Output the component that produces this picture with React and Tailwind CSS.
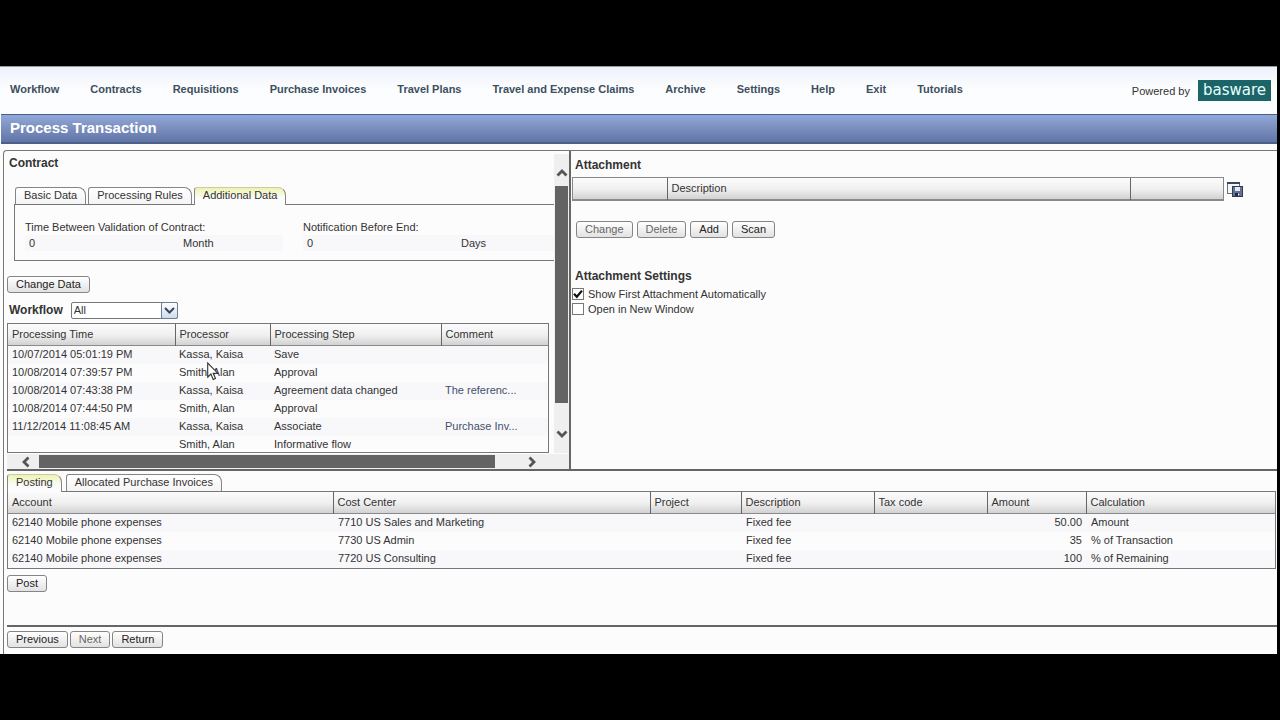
import React from 'react';

const navItems = [
  'Workflow',
  'Contracts',
  'Requisitions',
  'Purchase Invoices',
  'Travel Plans',
  'Travel and Expense Claims',
  'Archive',
  'Settings',
  'Help',
  'Exit',
  'Tutorials',
];

const workflowRows = [
  ['10/07/2014 05:01:19 PM', 'Kassa, Kaisa', 'Save', ''],
  ['10/08/2014 07:39:57 PM', 'Smith, Alan', 'Approval', ''],
  ['10/08/2014 07:43:38 PM', 'Kassa, Kaisa', 'Agreement data changed', 'The referenc...'],
  ['10/08/2014 07:44:50 PM', 'Smith, Alan', 'Approval', ''],
  ['11/12/2014 11:08:45 AM', 'Kassa, Kaisa', 'Associate', 'Purchase Inv...'],
  ['', 'Smith, Alan', 'Informative flow', ''],
];

const postingRows = [
  ['62140 Mobile phone expenses', '7710 US Sales and Marketing', '', 'Fixed fee', '', '50.00', 'Amount'],
  ['62140 Mobile phone expenses', '7730 US Admin', '', 'Fixed fee', '', '35', '% of Transaction'],
  ['62140 Mobile phone expenses', '7720 US Consulting', '', 'Fixed fee', '', '100', '% of Remaining'],
];

function Button({ children, disabled }) {
  return (
    <button
      type="button"
      disabled={disabled}
      className="h-[17px] px-2 rounded-[3px] border border-[#858585] bg-linear-to-b from-white to-[#e2e2e2] leading-[15px] whitespace-nowrap text-[#222] disabled:text-[#666]"
    >
      {children}
    </button>
  );
}

function Tab({ children, active }) {
  return (
    <button
      type="button"
      role="tab"
      aria-selected={Boolean(active)}
      className={
        active
          ? 'relative h-[18px] -mb-px px-2 pb-[2px] rounded-tl-[3px] rounded-tr-[8px] border border-b-0 border-[#858585] border-t-[#c9cda0] bg-linear-to-b from-[#eef3ae] to-[#fcfcfc] to-60% leading-[15px]'
          : 'h-[17px] px-2 pb-px rounded-tl-[3px] rounded-tr-[8px] border border-b-0 border-[#858585] bg-linear-to-b from-white to-[#f4f4f4] leading-[15px]'
      }
    >
      {children}
    </button>
  );
}

function HeaderRow({ labels }) {
  return (
    <thead>
      <tr className="h-[22px] bg-linear-to-b from-[#fbfbfb] via-[#f0f0f0] to-[#cfcfcf]">
        {labels.map((label, i) => (
          <th
            key={i}
            scope="col"
            className="px-1 pb-[3px] border-l border-[#666] first:border-l-0 shadow-[inset_0_-1px_0_#8a8a8a] text-left font-normal"
          >
            {label}
          </th>
        ))}
      </tr>
    </thead>
  );
}

function Chevron({ className }) {
  return (
    <svg className={className} viewBox="0 0 12 12" fill="none" stroke="#555" strokeWidth="2.8">
      <path d="M1.5 8.5 6 4l4.5 4.5" />
    </svg>
  );
}

function Checkbox({ id, label, defaultChecked }) {
  return (
    <div className="flex items-center gap-1 h-[15px]">
      <span className="relative flex">
        <input
          id={id}
          type="checkbox"
          defaultChecked={defaultChecked}
          className="peer appearance-none w-3 h-3 border border-[#777] bg-white"
        />
        <svg
          className="absolute inset-0 w-3 h-3 hidden peer-checked:block pointer-events-none"
          viewBox="0 0 12 12"
          fill="none"
          stroke="#111"
          strokeWidth="2.2"
        >
          <path d="M2 5.8 4.8 8.8 10 2.6" />
        </svg>
      </span>
      <label htmlFor={id}>{label}</label>
    </div>
  );
}

function Header() {
  return (
    <header className="flex items-center justify-between h-12 pl-[10px] pr-[6px] border-t border-[#999] bg-linear-to-b from-[#eef2fa] to-[#fcfdfe] to-50%">
      <nav className="flex gap-[31px] pb-1 font-bold text-[#3c4f60] whitespace-nowrap">
        {navItems.map((item) => (
          <a key={item} href="#">
            {item}
          </a>
        ))}
      </nav>
      <div className="flex items-center gap-2 text-[#333] whitespace-nowrap">
        <span>Powered by</span>
        <span className="h-[21px] px-[5px] bg-[#1b6468] text-[15px] leading-[21px] text-[#e8ffff] font-['DejaVu_Sans',sans-serif]">
          basware
        </span>
      </div>
    </header>
  );
}

function ContractPane() {
  return (
    <section className="flex flex-col w-[567px] shrink-0 border-r-2 border-[#666]">
      <div className="flex grow">
        <div className="grow min-w-0 pl-[3px] pt-1">
          <h2 className="pl-[2px] text-xs font-bold">Contract</h2>
          <div role="tablist" className="flex gap-[2px] mt-4 pl-2">
            <Tab>Basic Data</Tab>
            <Tab>Processing Rules</Tab>
            <Tab active>Additional Data</Tab>
          </div>
          <dl className="flex ml-[7px] pl-[10px] pt-[14px] pb-[9px] border border-r-0 border-[#777]">
            <div className="w-[278px] pr-5">
              <dt>Time Between Validation of Contract:</dt>
              <dd className="flex bg-[#f8f8fa] pl-1">
                <span className="w-[154px]">0</span>
                <span>Month</span>
              </dd>
            </div>
            <div className="grow">
              <dt>Notification Before End:</dt>
              <dd className="flex bg-[#f8f8fa] pl-1">
                <span className="w-[154px]">0</span>
                <span>Days</span>
              </dd>
            </div>
          </dl>
          <div className="flex mt-[15px]">
            <Button>Change Data</Button>
          </div>
          <div className="flex items-center gap-2 mt-[9px] pl-[2px]">
            <label htmlFor="workflow-filter" className="text-xs leading-[15px] pb-px font-bold">
              Workflow
            </label>
            <div className="relative flex">
              <select
                id="workflow-filter"
                className="appearance-none w-[107px] h-[17px] pl-[2px] rounded-[2px] border border-[#777] bg-white leading-[15px]"
              >
                <option>All</option>
              </select>
              <span className="absolute right-0 top-0 flex items-center justify-center w-[17px] h-[17px] rounded-[2px] border border-[#6d7f93] bg-linear-to-b from-white to-[#cfdcec] pointer-events-none">
                <svg className="w-[11px] h-[11px]" viewBox="0 0 11 11" fill="none" stroke="#34495e" strokeWidth="2">
                  <path d="M1 3l4.5 4.5L10 3" />
                </svg>
              </span>
            </div>
          </div>
          <div className="relative mt-1 mr-[5px] border border-[#777]">
            <table className="w-full table-fixed whitespace-nowrap">
              <colgroup>
                <col className="w-[167px]" />
                <col className="w-[95px]" />
                <col className="w-[171px]" />
                <col />
              </colgroup>
              <HeaderRow labels={['Processing Time', 'Processor', 'Processing Step', 'Comment']} />
              <tbody>
                {workflowRows.map(([time, processor, step, comment], i) => (
                  <tr key={i} className="h-[18px] last:h-4 odd:bg-[#f8f8fa] align-top">
                    <td className="px-1">{time}</td>
                    <td className="px-1">{processor}</td>
                    <td className="px-1">{step}</td>
                    <td className="px-1 text-[#44506a]">{comment && <a href="#">{comment}</a>}</td>
                  </tr>
                ))}
              </tbody>
            </table>
            {/* Mouse pointer */}
            <svg className="absolute left-[199px] top-[38px] w-3 h-[19px]" viewBox="0 0 12 19">
              <path
                d="M.7 1v14l3.2-3 2.3 5.5 2.3-1-2.3-5.3h4.6z"
                fill="#fff"
                stroke="#333"
                strokeWidth="1.1"
              />
            </svg>
          </div>
        </div>
        <div className="flex flex-col w-[15px] shrink-0 mt-[3px] bg-[#efefef]">
          <button type="button" aria-label="Scroll up" className="flex items-center justify-center h-8 pt-[6px]">
            <Chevron className="w-3 h-3" />
          </button>
          <div className="h-[217px] mx-px bg-[#636363]" />
          <button type="button" aria-label="Scroll down" className="flex items-center justify-center grow pt-3">
            <Chevron className="w-3 h-3 rotate-180" />
          </button>
        </div>
      </div>
      <div className="flex h-[15px] mt-px ml-[3px] bg-[#efefef]">
        <button type="button" aria-label="Scroll left" className="flex items-center justify-center w-8 pl-[6px]">
          <Chevron className="w-3 h-3 -rotate-90" />
        </button>
        <div className="w-[456px] mt-px mb-px bg-[#636363]" />
        <button type="button" aria-label="Scroll right" className="flex items-center justify-center grow">
          <Chevron className="w-3 h-3 rotate-90" />
        </button>
      </div>
    </section>
  );
}

function AttachmentPane() {
  return (
    <section className="grow pl-px pt-[6px]">
      <h2 className="pl-[3px] text-xs leading-[17px] font-bold">Attachment</h2>
      <div className="flex items-center gap-[3px] mt-[3px] pr-[34px]">
        <div className="grow border border-[#888]">
          <table className="w-full table-fixed">
            <colgroup>
              <col className="w-[94px]" />
              <col />
              <col className="w-[93px]" />
            </colgroup>
            <HeaderRow labels={['', 'Description', '']} />
          </table>
        </div>
        <button type="button" aria-label="Save layout" className="w-4 h-4">
          <svg viewBox="0 0 16 16" className="w-4 h-4">
            <rect x=".5" y="1.5" width="12" height="11" fill="#f4f6fa" stroke="#667086" />
            <path d="M0 2h13" stroke="#3a465c" strokeWidth="2" />
            <rect x="5.5" y="5.5" width="10" height="10" fill="#5f7396" stroke="#333d52" />
            <rect x="8" y="6" width="5" height="4" fill="#e6ebf4" />
            <rect x="8" y="12" width="5" height="3" fill="#222b3c" />
            <rect x="11" y="12.5" width="1.5" height="2" fill="#fff" />
          </svg>
        </button>
      </div>
      <div className="flex gap-1 mt-5 pl-1">
        <Button disabled>Change</Button>
        <Button disabled>Delete</Button>
        <Button>Add</Button>
        <Button>Scan</Button>
      </div>
      <h2 className="mt-[30px] pl-[3px] text-xs font-bold">Attachment Settings</h2>
      <div className="mt-[2px]">
        <Checkbox id="show-first" label="Show First Attachment Automatically" defaultChecked />
        <Checkbox id="new-window" label="Open in New Window" />
      </div>
    </section>
  );
}

function PostingPane() {
  return (
    <section className="ml-[3px] pt-[3px] border-t-2 border-[#666]">
      <div role="tablist" className="flex gap-1">
        <Tab active>Posting</Tab>
        <Tab>Allocated Purchase Invoices</Tab>
      </div>
      <div className="mr-px border border-[#777]">
        <table className="w-full table-fixed whitespace-nowrap">
          <colgroup>
            <col className="w-[325px]" />
            <col className="w-[317px]" />
            <col className="w-[91px]" />
            <col className="w-[133px]" />
            <col className="w-[113px]" />
            <col className="w-[99px]" />
            <col />
          </colgroup>
          <HeaderRow
            labels={['Account', 'Cost Center', 'Project', 'Description', 'Tax code', 'Amount', 'Calculation']}
          />
          <tbody>
            {postingRows.map((row, i) => (
              <tr key={i} className="h-[18px] odd:bg-[#f8f8fa] align-top">
                {row.map((cell, j) => (
                  <td key={j} className={j === 5 ? 'px-1 text-right' : 'px-[5px] first:pl-1'}>
                    {cell}
                  </td>
                ))}
              </tr>
            ))}
          </tbody>
        </table>
      </div>
      <div className="flex mt-[6px]">
        <Button>Post</Button>
      </div>
    </section>
  );
}

export default function App() {
  return (
    <div className="min-h-screen bg-black py-[66px] pr-[3px]">
      <div className="bg-[#fcfcfc] font-['Liberation_Sans',Arial,sans-serif] text-[11px] leading-4 text-[#333]">
        <Header />
        <div className="flex items-center h-[30px] ml-px pl-[9px] pb-px border-t border-b-2 border-[#4d5f87] bg-linear-to-b from-[#8fa8dc] via-[#8296c4] via-35% to-[#6076a8]">
          <h1 className="text-[15px] leading-5 font-bold text-white">Process Transaction</h1>
        </div>
        <div className="pt-[6px] pl-[3px]">
          <main className="border-t border-l border-[#777] rounded-tl-[4px]">
            <div className="flex">
              <ContractPane />
              <AttachmentPane />
            </div>
            <PostingPane />
            <footer className="flex gap-[2px] ml-[3px] mt-[33px] pt-1 pb-[6px] border-t-2 border-[#666]">
              <Button>Previous</Button>
              <Button disabled>Next</Button>
              <Button>Return</Button>
            </footer>
          </main>
        </div>
      </div>
    </div>
  );
}
